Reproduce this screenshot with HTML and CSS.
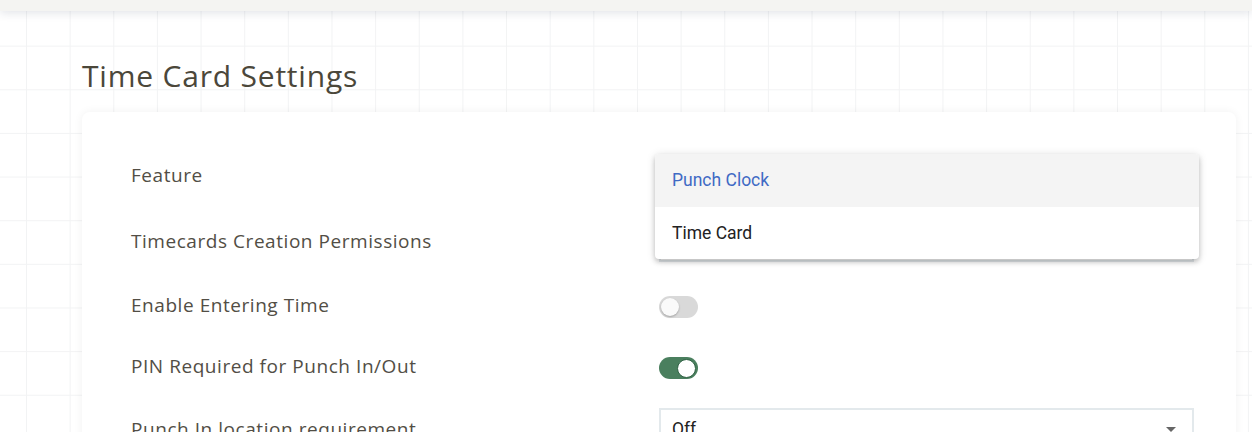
FILE: index.html
```html
<!DOCTYPE html>
<html lang="en">
<head>
<meta charset="utf-8">
<title>Time Card Settings</title>
<link rel="stylesheet" href="styles.css">
</head>
<body>
<header class="topbar"></header>
<main class="page">
  <h1 class="page-title">Time Card Settings</h1>
  <section class="card">
    <div class="row">
      <div class="label">Feature</div>
      <div class="control">
        <div class="select"><span class="select-value"></span><span class="arrow"></span></div>
        <ul class="menu">
          <li class="menu-item selected">Punch Clock</li>
          <li class="menu-item">Time Card</li>
        </ul>
      </div>
    </div>
    <div class="row">
      <div class="label">Timecards Creation Permissions</div>
      <div class="control">
        <div class="select"><span class="select-value"></span><span class="arrow"></span></div>
      </div>
    </div>
    <div class="row row-toggle">
      <div class="label">Enable Entering Time</div>
      <div class="control">
        <span class="toggle"><span class="knob"></span></span>
      </div>
    </div>
    <div class="row row-toggle">
      <div class="label">PIN Required for Punch In/Out</div>
      <div class="control">
        <span class="toggle on"><span class="knob"></span></span>
      </div>
    </div>
    <div class="row">
      <div class="label">Punch In location requirement</div>
      <div class="control">
        <div class="select"><span class="select-value">Off</span><span class="arrow"></span></div>
      </div>
    </div>
  </section>
</main>
</body>
</html>
```

FILE: styles.css
```css
html, body {
  margin: 0;
  padding: 0;
}
body {
  width: 1252px;
  height: 432px;
  overflow: hidden;
  background-color: #ffffff;
  background-image:
    linear-gradient(to right, #f2f3f4 1px, transparent 1px),
    linear-gradient(to bottom, #f2f3f4 1px, transparent 1px);
  background-size: 43.65px 43.65px;
  background-position: 26px 2px;
  font-family: "Open Sans", "Noto Sans", sans-serif;
}
.topbar {
  height: 11px;
  background: #f4f4f2;
  box-shadow: 0 2px 10px rgba(40, 60, 90, 0.14);
  position: relative;
  z-index: 2;
}
.page {
  padding: 0 16px 0 82px;
}
.page-title {
  margin: 0;
  padding-top: 47px;
  height: 54px;
  box-sizing: content-box;
  font-size: 30px;
  font-weight: 400;
  line-height: 36px;
  color: #4b473a;
  letter-spacing: 0.8px;
}
.card {
  background: #fff;
  border-radius: 8px;
  box-shadow: 0 0 10px rgba(0, 0, 0, 0.06);
  padding: 40px 42px 40px 49px;
  display: flex;
  flex-direction: column;
  gap: 20px;
}
.row {
  display: flex;
  align-items: center;
  min-height: 46px;
}
.row-toggle {
  min-height: 41px;
}
.label {
  width: 528px;
  font-size: 19px;
  color: #524e45;
  letter-spacing: 0.55px;
}
.control {
  flex: 1;
  position: relative;
}
.select {
  height: 42px;
  box-sizing: border-box;
  border: 2px solid #e3e9ec;
  display: flex;
  align-items: center;
  justify-content: space-between;
  padding: 0 16px 0 11px;
  font-family: Roboto, "Liberation Sans", sans-serif;
  font-size: 17.5px;
  color: #222;
}
.arrow {
  width: 0;
  height: 0;
  border-left: 5px solid transparent;
  border-right: 5px solid transparent;
  border-top: 5px solid #666;
}
.menu {
  position: absolute;
  top: 0;
  left: -4px;
  right: -5px;
  margin: 0;
  padding: 0;
  list-style: none;
  background: #fff;
  border-radius: 4px;
  box-shadow: 0 3px 5px rgba(0, 0, 0, 0.2), 0 1px 10px rgba(0, 0, 0, 0.12);
  overflow: hidden;
  z-index: 5;
  font-family: Roboto, "Liberation Sans", sans-serif;
  font-size: 17.5px;
}
.menu-item {
  height: 52.5px;
  display: flex;
  align-items: center;
  padding-left: 17px;
  color: #222;
}
.menu-item.selected {
  background: #f4f4f4;
  color: #3f6ac4;
}
.toggle {
  display: block;
  width: 39px;
  height: 22px;
  margin-top: 5px;
  border-radius: 11px;
  background: #d9d9d9;
  position: relative;
}
.knob {
  position: absolute;
  top: 2px;
  left: 2px;
  width: 18px;
  height: 18px;
  border-radius: 50%;
  background: #fafafa;
  box-shadow: 0 1px 2px rgba(0, 0, 0, 0.25);
}
.toggle.on {
  background: #4a7f5e;
}
.toggle.on .knob {
  left: 18px;
  top: 1.5px;
  width: 17px;
  height: 17px;
  background: #fff;
  border: 1px solid #2f6244;
  box-shadow: none;
}
```
